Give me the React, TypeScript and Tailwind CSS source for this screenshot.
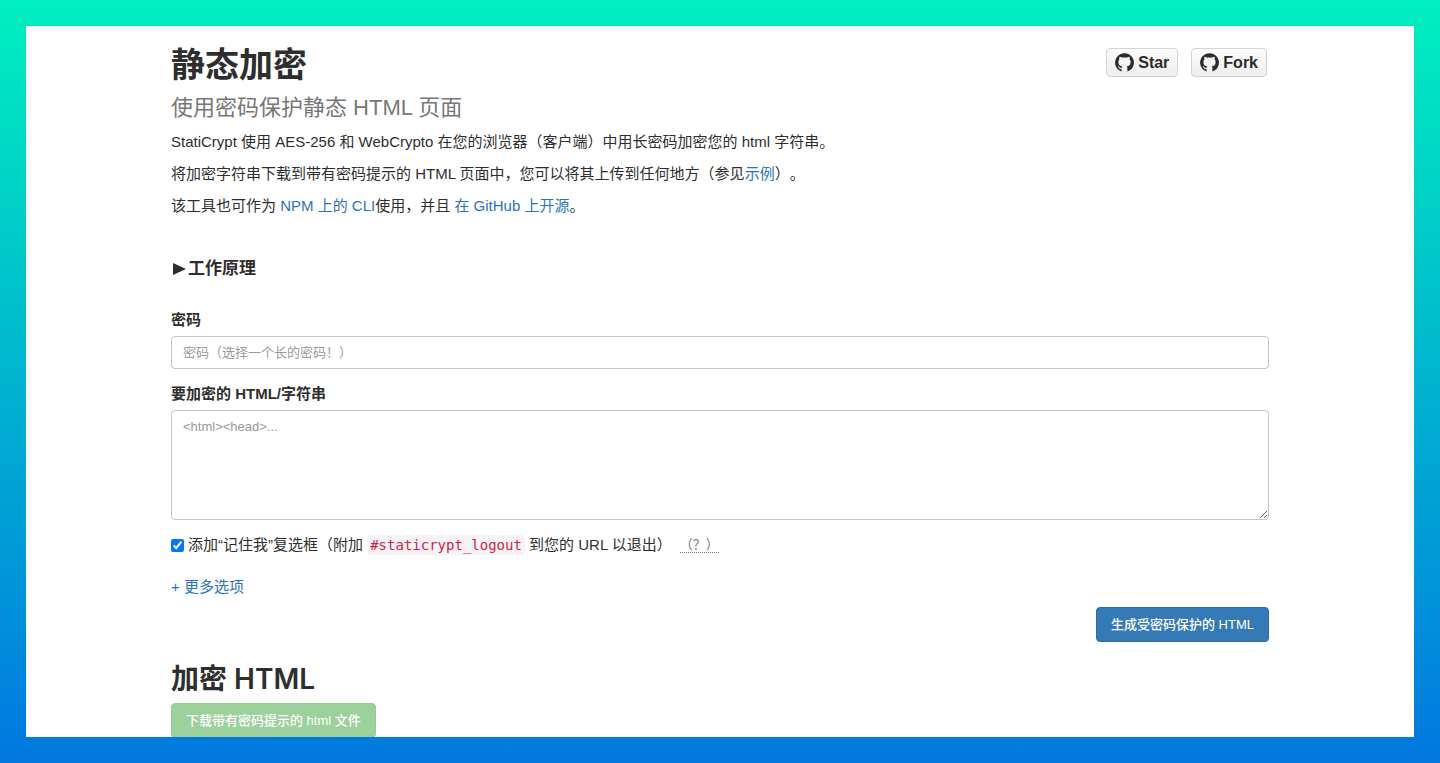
import type { ReactNode } from "react";

function GitHubMark() {
  return (
    <svg viewBox="0 0 19 19" className="size-[19px] fill-current" aria-hidden="true">
      <path d="M6.6 18.5A9.4 9.4 0 1 1 12.4 18.5V15.4C12.4 14.5 12.1 13.9 11.7 13.5C14.2 13.2 15.6 11.9 15.6 9C15.6 7.9 15.2 7 14.6 6.3C14.8 5.6 14.8 4.6 14.4 3.7C13.4 3.7 12.6 4.2 11.8 4.7C10.3 4.4 8.7 4.4 7.2 4.7C6.4 4.2 5.6 3.7 4.6 3.7C4.2 4.6 4.2 5.6 4.4 6.3C3.8 7 3.4 7.9 3.4 9C3.4 11.9 4.8 13.2 7.3 13.5C7 13.8 6.7 14.3 6.6 14.9C5.4 15.2 4.6 14.7 4.1 13.8C3.7 13.1 3.1 12.8 2.6 13C3.5 13.9 3.6 16.3 6.6 16.2Z" />
    </svg>
  );
}

function GitHubButton({ label }: { label: string }) {
  return (
    <a
      href="https://github.com/robinmoisson/staticrypt"
      className="flex h-[29px] items-center gap-1 rounded-[4px] border border-[#d4d4d4] bg-linear-to-b from-[#fcfcfc] to-[#eeeeee] px-2 font-['Liberation_Sans',sans-serif] text-[16px] font-bold text-[#2b2b2b]"
    >
      <GitHubMark />
      {label}
    </a>
  );
}

function Link({ href, children }: { href: string; children: ReactNode }) {
  return (
    <a href={href} className="text-[#2a73b8] hover:underline">
      {children}
    </a>
  );
}

const FIELD =
  "block w-full rounded-[4px] border border-[#c6c6c6] bg-white px-[11px] text-[13px] placeholder:text-[#999999]";

export default function App() {
  return (
    <div className="flex h-screen flex-col bg-linear-to-b/srgb from-[#00f0bf] to-[#0078e0] p-[26px] font-['Liberation_Sans','Noto_Sans_CJK_SC',sans-serif] text-[15px] leading-[22px] text-[#2e2e2e] [text-spacing-trim:space-all]">
      <div className="min-h-0 flex-1 overflow-hidden bg-white px-8">
        <main lang="zh-CN" className="mx-auto max-w-[1098px] pt-[18px]">
          <header className="flex items-start justify-between">
            <h1>
              <span className="block text-[34px] leading-[42px] font-bold">静态加密</span>
              <span className="block text-[22px] leading-[44px] text-[#777777]">
                使用密码保护静态 HTML 页面
              </span>
            </h1>
            <div className="flex gap-[13px] pt-1 pr-[2px]">
              <GitHubButton label="Star" />
              <GitHubButton label="Fork" />
            </div>
          </header>

          <div className="flex flex-col gap-[10px] pt-px">
            <p>StatiCrypt 使用 AES-256 和 WebCrypto 在您的浏览器（客户端）中用长密码加密您的 html 字符串。</p>
            <p>
              将加密字符串下载到带有密码提示的 HTML 页面中，您可以将其上传到任何地方（参见
              <Link href="#example">示例</Link>）。
            </p>
            <p>
              该工具也可作为 <Link href="#npm">NPM 上的 CLI</Link>使用，并且{" "}
              <Link href="#github">在 GitHub 上开源</Link>。
            </p>
          </div>

          <h4 className="mt-10">
            <button type="button" className="flex items-center gap-px text-[17px] leading-[24px] font-bold">
              <svg viewBox="0 0 16 14" className="h-[14px] w-4 fill-current" aria-hidden="true">
                <path d="M2 1L15 7L2 13Z" />
              </svg>
              工作原理
            </button>
          </h4>

          <form className="pt-7" onSubmit={(e) => e.preventDefault()}>
            <label htmlFor="password" className="block font-bold">
              密码
            </label>
            <input
              id="password"
              type="password"
              placeholder="密码（选择一个长的密码！）"
              className={`${FIELD} mt-[5px] h-[33px] [text-spacing-trim:space-all]`}
            />

            <label htmlFor="html" className="mt-[14px] block font-bold">
              要加密的 HTML/字符串
            </label>
            <textarea
              id="html"
              placeholder="<html><head>..."
              className={`${FIELD} mt-[5px] h-[110px] resize-y py-[6px] leading-[19px]`}
            />

            <div className="mt-[14px] flex items-center">
              <input
                id="remember"
                type="checkbox"
                defaultChecked
                className="mr-1 size-[13px] accent-[#0075ff]"
              />
              <label htmlFor="remember">
                添加“记住我”复选框（附加{" "}
                <code className="rounded-[4px] bg-[#f9f2f4] px-[3px] py-[2px] font-['DejaVu_Sans_Mono',monospace] text-[14px] text-[#c7254e]">
                  #staticrypt_logout
                </code>{" "}
                到您的 URL 以退出）
              </label>
              <abbr
                title="记住密码"
                className="ml-2 border-b border-dotted border-[#777777] text-[13px] leading-[15px] text-[#777777] no-underline"
              >
                （？）
              </abbr>
            </div>

            <p className="mt-5">
              <Link href="#options">+ 更多选项</Link>
            </p>

            <div className="mt-[9px] flex justify-end">
              <button
                type="submit"
                className="h-[35px] rounded-[4px] border border-[#2e6da4] bg-[#337ab7] px-[14px] text-[13px] font-medium text-white"
              >
                生成受密码保护的 HTML
              </button>
            </div>
          </form>

          <h2 className="mt-5 font-['Inter','Noto_Sans_CJK_SC',sans-serif] text-[28px] leading-[34px] font-semibold">
            加密 HTML
          </h2>
          <button
            type="button"
            className="mt-[7px] h-[35px] rounded-[4px] border border-[#94ca94] bg-[#9cd19c] px-[14px] text-[13px] font-medium text-white"
          >
            下载带有密码提示的 html 文件
          </button>
        </main>
      </div>
    </div>
  );
}
